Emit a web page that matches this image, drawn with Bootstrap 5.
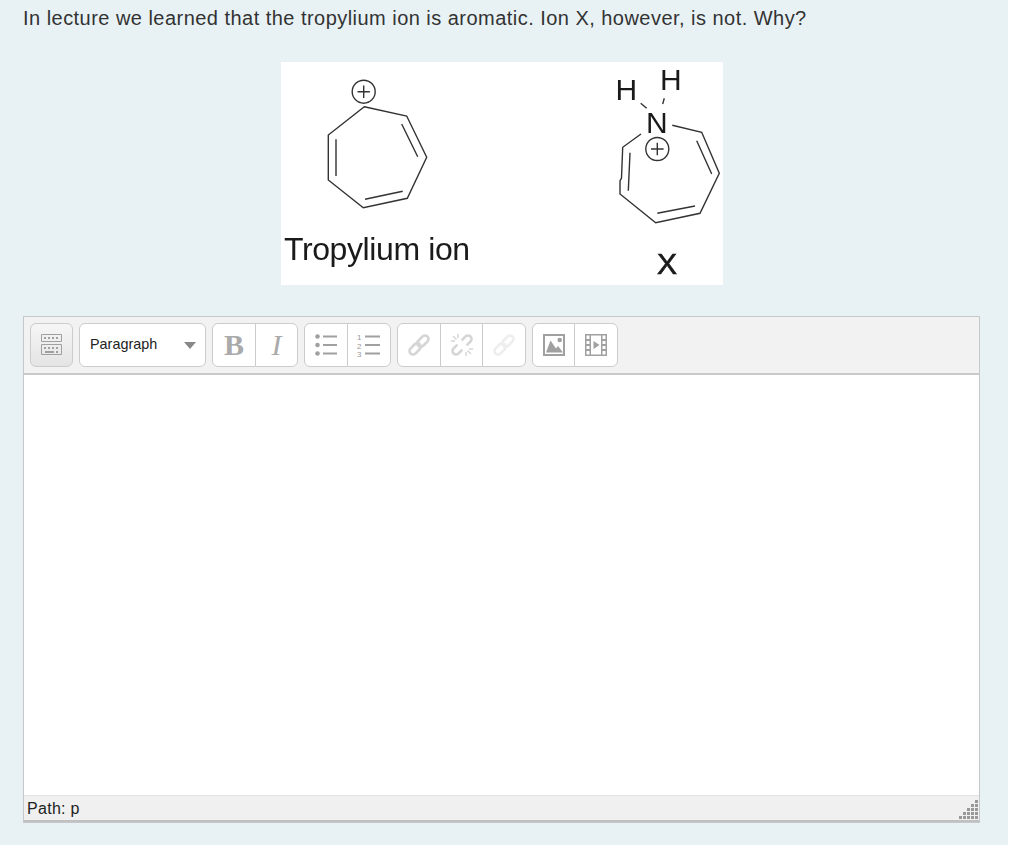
<!DOCTYPE html>
<html lang="en">
<head>
<meta charset="utf-8">
<title>Question</title>
<link rel="stylesheet" href="https://cdn.jsdelivr.net/npm/bootstrap@5.3.0/dist/css/bootstrap.min.css">
<style>
body{background:#fff;font-family:"Liberation Sans",Arial,sans-serif;color:#222}
.que-box{width:1008px;height:845px;background:#e8f2f5;padding:6px 28px 0 23px}
.que-text{font-size:20px;line-height:24px;height:24px;margin:0 0 32px;color:#333;letter-spacing:.465px;white-space:nowrap}
.chem-img{display:block;width:442px;height:223px;background:#fff;margin:0 0 31px 258px;filter:blur(.35px)}
.chem-img text{font-family:"Liberation Sans",Arial,sans-serif;fill:#1a1a1a}
.chem-img .bond{stroke:#333;stroke-width:1.4;fill:none}
.chem-img .label-x{stroke:#1a1a1a;stroke-width:.7}
.ed-box{height:507px;border:1px solid #c4c8ca;background:#fff}
.ed-bar{height:58px;background:#f2f2f2;border-bottom:2px solid #c9c9c9;padding:6px 0 0 6px;gap:6px}
.ed-btn{height:44px;background:#fff;border:1px solid #ccc;border-radius:6px;padding:0;display:flex;align-items:center;justify-content:center;color:#999}
.ed-btn svg{display:block}
.btn-sink{width:43px;background:linear-gradient(#f6f6f6,#e4e4e4)}
.btn-format{width:127px;justify-content:space-between;padding:0 9px 0 10px;color:#222;font-size:14.4px}
.caret-shape{width:0;height:0;border-left:6px solid transparent;border-right:6px solid transparent;border-top:7px solid #888}
.ed-grp{display:flex}
.ed-grp .ed-btn{border-radius:0;margin-left:-1px}
.ed-grp .ed-btn:first-child{border-radius:6px 0 0 6px;margin-left:0}
.ed-grp .ed-btn:last-child{border-radius:0 6px 6px 0}
.wide-cell{width:44px}
.narrow-cell{width:43px}
.serif-b,.serif-i{font-family:"Liberation Serif",serif;font-size:30px;line-height:1;color:#aaa}
.serif-b{font-weight:700}
.serif-i{font-style:italic}
.ico-fill{fill:#a0a0a0}
.ico-stroke{stroke:#a0a0a0;fill:none}
.ico-num{font-family:"Liberation Sans",Arial,sans-serif;font-size:8px;fill:#999}
.ed-area{height:420px;background:#fff}
.ed-status{height:27px;background:#f0f0f0;border-top:1px solid #e2e2e2;border-bottom:2px solid #c0c0c0;font-size:16px;line-height:25px;padding-left:3px;color:#222;letter-spacing:.3px}
.ed-grip{position:absolute;right:0;bottom:0;display:block}
</style>
</head>
<body class="m-0">
<div class="que-box">
  <p class="que-text">In lecture we learned that the tropylium ion is aromatic. Ion X, however, is not. Why?</p>
  <svg class="chem-img" viewBox="281 62 442 223" role="img" aria-label="Tropylium ion and ion X">
    <circle class="bond" cx="363.7" cy="91.7" r="11.5"/>
    <path class="bond" d="M357.5 91.7h12.4M363.7 85.5v12.4"/>
    <path class="bond" d="M364.3 106.7L406.7 116L426.7 157.3L407.3 198.300L363.3 207.7L328.3 180V135Z"/>
    <path class="bond" d="M401.7 124L417.7 156.7M365 199.3L402.7 191.3M336 139.3V176"/>
    <text x="284" y="260" font-size="32" letter-spacing="-.4">Tropylium ion</text>
    <text x="615.500" y="100" font-size="30">H</text>
    <text x="660" y="90" font-size="30">H</text>
    <text x="646" y="133" font-size="30">N</text>
    <path class="bond" d="M640.7 103.3L646.7 108.3M664.3 98.3L662.7 104"/>
    <path class="bond" d="M641 134L622.7 147.300L621.500 178L620 181L620 194L655.7 222.7L700 213.3L719.3 173.3L701.7 132.3L672.3 125.3"/>
    <path class="bond" d="M630 152.7L628.3 190.7M657.3 213.3L695 206M696.7 140.7L711.7 174"/>
    <circle class="bond" cx="657.3" cy="149" r="11.5"/>
    <path class="bond" d="M651 149h12.6M657.3 142.7v12.6"/>
    <text class="label-x" x="657" y="274" font-size="30">X</text>
  </svg>
  <div class="ed-box d-flex flex-column">
    <div class="ed-bar d-flex align-items-start">
      <button type="button" class="ed-btn btn-sink" aria-label="Toolbar toggle">
        <svg width="24" height="24" viewBox="0 0 24 24"><path class="ico-stroke" d="M1.500 1.500h20v7h-20zM1.500 11.500h20v10h-20z"/><path class="ico-fill" d="M4 4h2v2H4zM8 4h2v2H8zM12 4h2v2h-2zM16 4h2v2h-2zM4 14h2v2H4zM8 14h2v2H8zM12 14h2v2h-2zM16 14h2v2h-2zM5 18h9v2H5zM16 18h2v2h-2z"/></svg>
      </button>
      <button type="button" class="ed-btn btn-format"><span>Paragraph</span><span class="caret-shape"></span></button>
      <div class="ed-grp">
        <button type="button" class="ed-btn wide-cell serif-b">B</button>
        <button type="button" class="ed-btn narrow-cell serif-i">I</button>
      </div>
      <div class="ed-grp">
        <button type="button" class="ed-btn wide-cell" aria-label="Bullets">
          <svg width="24" height="24" viewBox="0 0 24 24"><circle class="ico-fill" cx="3.500" cy="3.500" r="2.300"/><circle class="ico-fill" cx="3.500" cy="12" r="2.300"/><circle class="ico-fill" cx="3.500" cy="20.500" r="2.300"/><path class="ico-stroke" stroke-width="2" d="M9 3.500h14M9 12h14M9 20.500h14"/></svg>
        </button>
        <button type="button" class="ed-btn wide-cell" aria-label="Numbers">
          <svg width="26" height="26" viewBox="0 0 26 26"><text class="ico-num" x="1" y="8">1</text><text class="ico-num" x="1" y="16.500">2</text><text class="ico-num" x="1" y="25">3</text><path class="ico-stroke" stroke-width="2" d="M9 4.500h15M9 13h15M9 21.500h15"/></svg>
        </button>
      </div>
      <div class="ed-grp">
        <button type="button" class="ed-btn wide-cell" aria-label="Link">
          <svg width="24" height="24" viewBox="0 0 24 24" fill="none" stroke="#d6d6d6" stroke-width="2.600"><g transform="rotate(-45 12 12)"><rect x="0" y="8.500" width="13" height="7" rx="3.500"/><rect x="11" y="8.500" width="13" height="7" rx="3.500"/></g></svg>
        </button>
        <button type="button" class="ed-btn narrow-cell" aria-label="Unlink">
          <svg width="24" height="24" viewBox="0 0 24 24" fill="none" stroke="#d6d6d6" stroke-width="2.600"><g transform="rotate(-45 12 12)"><path d="M9 8.500H3.500a3.500 3.500 0 0 0 0 7H9"/><path d="M15 8.500h5.500a3.500 3.500 0 0 1 0 7H15"/></g><path stroke-width="1.500" d="M8 1v4M1 8h4M3 3l3.500 3.500M16 23v-4M23 16h-4M21 21l-3.500-3.500"/></svg>
        </button>
        <button type="button" class="ed-btn wide-cell" aria-label="Anchor">
          <svg width="24" height="24" viewBox="0 0 24 24" fill="none" stroke="#eeeeee" stroke-width="2.600"><g transform="rotate(-45 12 12)"><rect x="0" y="8.500" width="13" height="7" rx="3.500"/><rect x="11" y="8.500" width="13" height="7" rx="3.500"/></g></svg>
        </button>
      </div>
      <div class="ed-grp">
        <button type="button" class="ed-btn narrow-cell" aria-label="Image">
          <svg width="22" height="22" viewBox="0 0 22 22"><path class="ico-stroke" stroke-width="2" d="M1 1h20v20H1z"/><path class="ico-fill" d="M3 18.500L7.500 6.500L13 14.500L15 12L20 18.500z"/><circle class="ico-fill" cx="16.700" cy="6" r="2.300"/></svg>
        </button>
        <button type="button" class="ed-btn wide-cell" aria-label="Media">
          <svg width="22" height="22" viewBox="0 0 22 22"><path class="ico-fill" fill-rule="evenodd" d="M0 0h22v22H0zM1.500 1.500v3.500h3v-3.500zM1.500 7v3h3V7zM1.500 12v3h3v-3zM1.500 17v3.500h3V17zM17.500 1.500v3.500h3v-3.500zM17.500 7v3h3V7zM17.500 12v3h3v-3zM17.500 17v3.500h3V17zM6 1.500v19h10v-19z"/><path class="ico-fill" d="M8.500 7l6 4-6 4z"/></svg>
        </button>
      </div>
    </div>
    <div class="ed-area"></div>
    <div class="ed-status position-relative">Path: p
      <svg class="ed-grip" width="20" height="20" viewBox="0 0 20 20"><defs><pattern id="gripdots" width="4" height="4" patternUnits="userSpaceOnUse"><rect width="3" height="3" fill="#999"/></pattern></defs><path d="M20 0V20H0V16H4V12H8V8H12V4H16V0Z" fill="url(#gripdots)"/></svg>
    </div>
  </div>
</div>
</body>
</html>
